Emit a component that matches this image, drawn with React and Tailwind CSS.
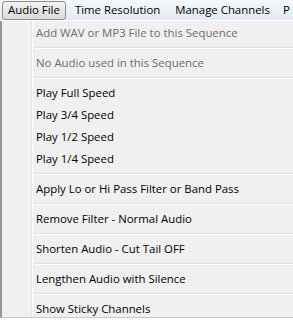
import React from "react";

const items = [
  { label: "Add WAV or MP3 File to this Sequence", disabled: true },
  "sep",
  { label: "No Audio used in this Sequence", disabled: true },
  "sep",
  { label: "Play Full Speed" },
  { label: "Play 3/4 Speed" },
  { label: "Play 1/2 Speed" },
  { label: "Play 1/4 Speed" },
  "sep",
  { label: "Apply Lo or Hi Pass Filter or Band Pass" },
  "sep",
  { label: "Remove Filter - Normal Audio" },
  "sep",
  { label: "Shorten Audio - Cut Tail OFF" },
  "sep",
  { label: "Lengthen Audio with Silence" },
  "sep",
  { label: "Show Sticky Channels" },
];

export default function App() {
  return (
    <div
      className="w-[293px] h-[322px] bg-white overflow-hidden text-[11.4px] text-black"
      style={{ fontFamily: '"Open Sans", "Noto Sans", sans-serif' }}
    >
      {/* barra de menu */}
      <div className="h-[20px] flex items-center bg-gradient-to-b from-[#f6f8fc] to-[#e3eaf4] whitespace-nowrap overflow-hidden">
        <div className="ml-[2px] h-[19px] px-[5px] flex items-center border border-[#8e8f8f] rounded-[3px] bg-gradient-to-b from-[#f2f2f2] to-[#dadada]">
          Audio File
        </div>
        <div className="ml-[9px]">Time Resolution</div>
        <div className="ml-[15px]">Manage Channels</div>
        <div className="ml-[13px]">P</div>
      </div>

      {/* menu desplegable */}
      <div className="relative h-[297px] mt-[1px] border-l-[2px] border-l-[#979797] border-b border-b-[#c8c8c8] bg-[#f0f0f0] pt-[1px]">
        <div className="absolute top-0 bottom-0 left-[29px] w-[1px] bg-[#e2e3e3]" />
        <div className="absolute top-0 bottom-0 left-[30px] w-[1px] bg-white" />
        {items.map((it, i) =>
          it === "sep" ? (
            <div key={i} className="h-[8px] flex flex-col justify-center pl-[32px]">
              <div className="h-[1px] bg-[#e0e0e0]" />
              <div className="h-[1px] bg-white" />
            </div>
          ) : (
            <div
              key={i}
              className={
                "h-[22px] flex items-center pl-[34px] whitespace-nowrap " +
                (it.disabled ? "text-[#6d6d6d]" : "text-black")
              }
            >
              {it.label}
            </div>
          )
        )}
      </div>
    </div>
  );
}
